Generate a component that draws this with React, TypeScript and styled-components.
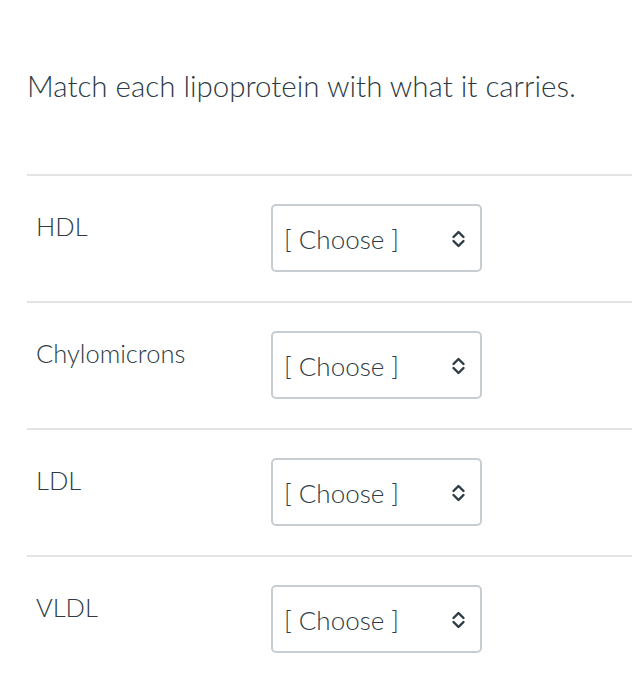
import React from "react";
import styled, { createGlobalStyle } from "styled-components";

const GlobalStyle = createGlobalStyle`
  body {
    margin: 0;
    background: #ffffff;
    font-family: Lato, "Open Sans", sans-serif;
  }
`;

const Wrapper = styled.div`
  width: 641px;
  height: 700px;
  padding: 67px 9px 0 27px;
  box-sizing: border-box;
  overflow: hidden;
`;

const Title = styled.h1`
  margin: 0 0 69px 0;
  font-weight: 300;
  font-size: 29.5px;
  line-height: 38px;
  color: #2d3b45;
`;

const Row = styled.div`
  display: flex;
  align-items: flex-start;
  border-top: 2px solid #e2e4e6;
  padding: 28px 0 29px 0;
  height: 127px;
  box-sizing: border-box;
`;

const Label = styled.div`
  width: 235px;
  padding-left: 9px;
  margin-top: 8px;
  font-weight: 300;
  font-size: 25.5px;
  line-height: 28px;
  color: #2d3b45;
`;

const Select = styled.div`
  display: flex;
  align-items: center;
  justify-content: space-between;
  width: 211px;
  height: 68px;
  box-sizing: border-box;
  border: 2px solid #c7cdd1;
  border-radius: 5px;
  padding: 2px 14px 0 11px;
  font-weight: 300;
  font-size: 26px;
  color: #2d3b45;
`;

const Chevrons = () => (
  <svg width="15" height="20" viewBox="0 0 15 20" fill="none">
    <path d="M2.5 8 L7.5 3 L12.5 8" stroke="#2d3b45" strokeWidth="2.4" strokeLinecap="round" strokeLinejoin="round" />
    <path d="M2.5 12 L7.5 17 L12.5 12" stroke="#2d3b45" strokeWidth="2.4" strokeLinecap="round" strokeLinejoin="round" />
  </svg>
);

const items = ["HDL", "Chylomicrons", "LDL", "VLDL"];

const App = () => {
  return (
    <>
      <GlobalStyle />
      <Wrapper>
        <Title>Match each lipoprotein with what it carries.</Title>
        {items.map((item) => (
          <Row key={item}>
            <Label>{item}</Label>
            <Select>
              <span>[ Choose ]</span>
              <Chevrons />
            </Select>
          </Row>
        ))}
      </Wrapper>
    </>
  );
};

export default App;
